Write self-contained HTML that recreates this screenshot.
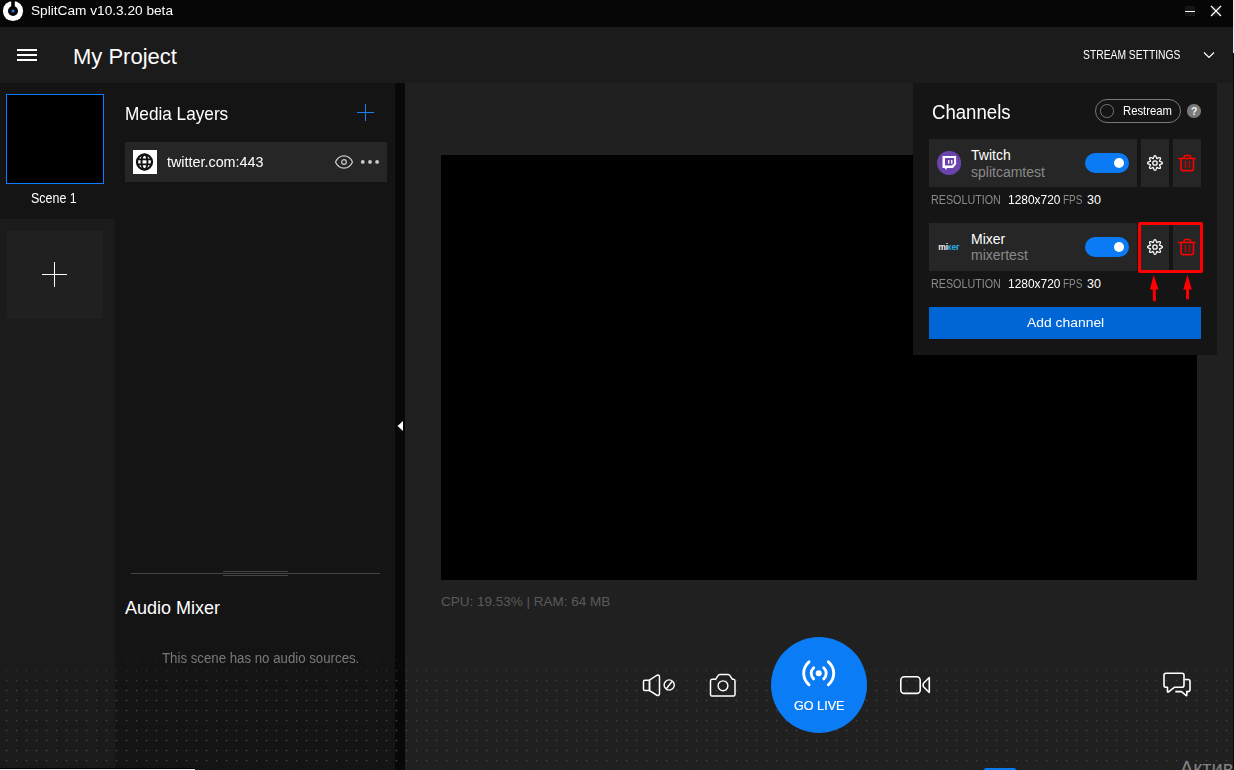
<!DOCTYPE html>
<html><head><meta charset="utf-8">
<style>
*{margin:0;padding:0;box-sizing:border-box}
html,body{width:1234px;height:770px;overflow:hidden;background:#202020;font-family:"Liberation Sans",sans-serif;color:#fff}
.a{position:absolute}
.t{position:absolute;white-space:nowrap;line-height:1;transform-origin:0 0}
</style></head><body>
<!-- title bar -->
<div class="a" style="left:0;top:0;width:1234px;height:27px;background:#060606"></div>
<svg class="a" style="left:0;top:0" width="28" height="24" viewBox="0 0 28 24">
  <circle cx="13" cy="11" r="10.1" fill="#fff"/>
  <circle cx="13" cy="11" r="5" fill="#060606"/>
  <rect x="11.2" y="0" width="3.6" height="7" fill="#060606"/>
  <circle cx="13" cy="11" r="1.6" fill="#1a78f0"/>
</svg>
<div class="t" id="title" style="left:31px;top:4px;font-size:13.4px;transform:scaleX(1.02)">SplitCam v10.3.20 beta</div>
<div class="a" style="left:1185px;top:6px;width:10px;height:10px;background:#161616"></div>
<div class="a" style="left:1185px;top:10.5px;width:10px;height:1.5px;background:#fff"></div>
<div class="a" style="left:1211px;top:6px;width:10px;height:10px;background:#161616"></div>
<svg class="a" style="left:1210px;top:5px" width="12" height="12" viewBox="0 0 12 12"><path d="M1 1L11 11M11 1L1 11" stroke="#fff" stroke-width="1.3"/></svg>
<div class="a" style="left:1233px;top:0;width:1px;height:23px;background:#e8e8e8"></div>

<!-- header -->
<div class="a" style="left:0;top:27px;width:1233px;height:56px;background:#1b1b1b"></div>
<div class="a" style="left:17px;top:49px;width:20px;height:2px;background:#fff"></div>
<div class="a" style="left:17px;top:54px;width:20px;height:2px;background:#fff"></div>
<div class="a" style="left:17px;top:59px;width:20px;height:2px;background:#fff"></div>
<div class="t" id="myproj" style="left:73px;top:46px;font-size:22px">My Project</div>
<div class="t" id="ss" style="left:1083px;top:49px;font-size:12.5px;transform:scaleX(0.825)">STREAM SETTINGS</div>
<svg class="a" style="left:1203px;top:51px" width="12" height="9" viewBox="0 0 12 9"><path d="M1 1.5L6 6.5L11 1.5" stroke="#fff" stroke-width="1.2" fill="none"/></svg>

<!-- scene column -->
<div class="a" style="left:0;top:83px;width:115px;height:687px;background:#1b1b1b"></div>
<div class="a" style="left:0;top:83px;width:115px;height:136px;background:#141414"></div>
<div class="a" style="left:6px;top:94px;width:98px;height:90px;border:1px solid #0a7cff;background:#000"></div>
<div class="t" id="scene1" style="left:31px;top:191px;font-size:14.5px;transform:scaleX(0.86)">Scene 1</div>
<div class="a" style="left:7px;top:231px;width:96px;height:88px;background:#202020"></div>
<div class="a" style="left:42px;top:274px;width:25px;height:1px;background:#fff"></div>
<div class="a" style="left:54px;top:262px;width:1px;height:25px;background:#fff"></div>

<!-- media layers column -->
<div class="a" style="left:115px;top:83px;width:280px;height:687px;background:#141414"></div>
<div class="t" id="ml" style="left:125px;top:104px;font-size:19px;transform:scaleX(0.905)">Media Layers</div>
<div class="a" style="left:357px;top:112px;width:17px;height:1px;background:#1a7df0"></div>
<div class="a" style="left:365px;top:104px;width:1px;height:17px;background:#1a7df0"></div>
<div class="a" style="left:125px;top:142px;width:262px;height:40px;background:#262626"></div>
<div class="a" style="left:133px;top:150px;width:24px;height:24px;background:#fff"></div>
<svg class="a" style="left:133px;top:150px" width="24" height="24" viewBox="0 0 24 24">
  <circle cx="11.5" cy="12" r="7.5" fill="none" stroke="#111" stroke-width="2.3"/>
  <ellipse cx="11.5" cy="12" rx="3" ry="7.5" fill="none" stroke="#111" stroke-width="1.9"/>
  <path d="M4 9.4H19M4 14.4H19" stroke="#111" stroke-width="1.9"/>
</svg>
<div class="t" id="tw" style="left:167px;top:155px;font-size:14px;transform:scaleX(1.025)">twitter.com:443</div>
<svg class="a" style="left:334px;top:154px" width="20" height="16" viewBox="0 0 20 16">
  <path d="M1.5 8C5 -0.2 15 -0.2 18.5 8C15 16.2 5 16.2 1.5 8Z" fill="none" stroke="#ccc" stroke-width="1.2"/>
  <circle cx="10" cy="8" r="2.3" fill="none" stroke="#ccc" stroke-width="1.2"/>
</svg>

<svg class="a" style="left:355px;top:155px" width="30" height="14" viewBox="0 0 30 14"><circle cx="7.75" cy="6.9" r="1.9" fill="#ccc"/><circle cx="15" cy="6.9" r="1.9" fill="#ccc"/><circle cx="22.1" cy="6.9" r="1.9" fill="#ccc"/></svg>
<div class="a" style="left:131px;top:573px;width:249px;height:1px;background:#444"></div>
<div class="a" style="left:223px;top:571px;width:65px;height:1px;background:#444"></div>
<div class="a" style="left:223px;top:575px;width:65px;height:1px;background:#444"></div>
<div class="t" id="am" style="left:125px;top:599px;font-size:18px">Audio Mixer</div>
<div class="t" id="nas" style="left:162px;top:651px;font-size:14px;color:#7a7a7a;transform:scaleX(0.946)">This scene has no audio sources.</div>

<!-- divider -->
<div class="a" style="left:395px;top:83px;width:10px;height:687px;background:#080808"></div>
<svg class="a" style="left:396px;top:420px" width="8" height="12" viewBox="0 0 8 12"><path d="M7 1V11L1.5 6Z" fill="#fff"/></svg>

<!-- preview -->
<div class="a" style="left:405px;top:83px;width:828px;height:687px;background:#202020"></div>
<div class="a" style="left:441px;top:155px;width:756px;height:425px;background:#000"></div>
<div class="t" id="cpu" style="left:441px;top:595px;font-size:13.5px;color:#5a5a5a;transform:scaleX(1.0)">CPU: 19.53% | RAM: 64 MB</div>

<!-- channels panel -->
<div class="a" style="left:913px;top:83px;width:304px;height:272px;background:#151515"></div>
<div class="t" id="ch" style="left:932px;top:102px;font-size:20px;transform:scaleX(0.93)">Channels</div>
<div class="a" style="left:1095px;top:99px;width:86px;height:24px;border:1px solid #7a7a7a;border-radius:12px"></div>
<div class="a" style="left:1100px;top:104px;width:13.5px;height:13.5px;border:1px solid #777;border-radius:50%"></div>
<div class="t" id="rs" style="left:1123px;top:104px;font-size:13px;transform:scaleX(0.87)">Restream</div>
<div class="a" style="left:1187.3px;top:104px;width:13.5px;height:13.5px;border-radius:50%;background:#7a7a7a"></div>
<div class="t" style="left:1191px;top:105.5px;font-size:10.5px;font-weight:bold;color:#f0f0f0">?</div>

<!-- twitch card -->
<div class="a" style="left:929px;top:139px;width:208px;height:48px;background:#262626"></div>
<div class="a" style="left:1141px;top:139px;width:28px;height:48px;background:#262626"></div>
<div class="a" style="left:1173px;top:139px;width:28px;height:48px;background:#262626"></div>
<svg class="a" style="left:937px;top:151px" width="24" height="24" viewBox="0 0 24 24"><circle cx="12.1" cy="12" r="12.1" fill="#6a44ac"/><path d="M5.5 5.1H19.1V13.2L16 17.1H9.7L9.5 18.9L7.5 17.1H5.5Z" fill="#fff"/><path d="M8 7.1H17.1V12.4L14.8 14.6H8Z" fill="#6a44ac"/><rect x="11.1" y="9" width="1.3" height="3.7" fill="#fff"/><rect x="14.1" y="9" width="1.3" height="3.7" fill="#fff"/></svg>
<svg class="a" style="left:1143px;top:151px" width="24" height="24" viewBox="0 0 24 24"><path d="M10.16 7.57L11.10 5.16Q12.00 4.00 12.90 5.16L13.84 7.57L16.20 6.53Q17.66 6.34 17.47 7.80L16.43 10.16L18.84 11.10Q20.00 12.00 18.84 12.90L16.43 13.84L17.47 16.20Q17.66 17.66 16.20 17.47L13.84 16.43L12.90 18.84Q12.00 20.00 11.10 18.84L10.16 16.43L7.80 17.47Q6.34 17.66 6.53 16.20L7.57 13.84L5.16 12.90Q4.00 12.00 5.16 11.10L7.57 10.16L6.53 7.80Q6.34 6.34 7.80 6.53Z" fill="none" stroke="#fff" stroke-width="1.25" stroke-linejoin="round"/><circle cx="12" cy="12" r="2.2" fill="none" stroke="#fff" stroke-width="1.3"/></svg>
<svg class="a" style="left:1175px;top:151px" width="24" height="24" viewBox="0 0 24 24"><path d="M3.2 7.5H20.7" stroke="#f00" stroke-width="1.5"/><path d="M9 7.3V6.3Q9 4.6 10.7 4.6H13.8Q15.5 4.6 15.5 6.3V7.3" fill="none" stroke="#f00" stroke-width="1.5"/><path d="M6 8V17.5Q6 19.6 8.1 19.6H16.4Q18.5 19.6 18.5 17.5V8" fill="none" stroke="#f00" stroke-width="1.6"/><path d="M10.5 10V17M14.5 10V17" stroke="#c00" stroke-width="1.4"/></svg>
<div class="t" id="twt" style="left:971px;top:148px;font-size:14px">Twitch</div>
<div class="t" id="twu" style="left:971px;top:165px;font-size:14px;color:#8a8a8a">splitcamtest</div>
<div class="a" style="left:1085px;top:153px;width:44px;height:20px;border-radius:10px;background:#0a7af5"></div>
<div class="a" style="left:1114px;top:158px;width:10px;height:10px;border-radius:50%;background:#fff"></div>
<div class="t" id="res1" style="left:931px;top:194px;font-size:12.5px;color:#8a8a8a;transform:scaleX(0.86)">RESOLUTION</div>
<div class="t" id="r1" style="left:1008px;top:194px;font-size:12.5px;transform:scaleX(0.955)">1280x720</div>
<div class="t" id="f1" style="left:1063px;top:194px;font-size:12.5px;color:#8a8a8a;transform:scaleX(0.8)">FPS</div>
<div class="t" id="n1" style="left:1087px;top:194px;font-size:12.5px">30</div>

<!-- mixer card -->
<div class="a" style="left:929px;top:223px;width:208px;height:48px;background:#262626"></div>
<div class="a" style="left:1141px;top:223px;width:28px;height:48px;background:#262626"></div>
<div class="a" style="left:1173px;top:223px;width:28px;height:48px;background:#262626"></div>
<svg class="a" style="left:936px;top:240px" width="28" height="14" viewBox="0 0 28 14"><text x="2.3" y="10" font-family="Liberation Sans" font-weight="bold" font-size="8.6" fill="#eee" letter-spacing="-0.3">mi</text><text x="10.8" y="10" font-family="Liberation Sans" font-weight="bold" font-size="8.6" fill="#29b0e6" letter-spacing="-0.2">xer</text></svg>
<svg class="a" style="left:1143px;top:235px" width="24" height="24" viewBox="0 0 24 24"><path d="M10.16 7.57L11.10 5.16Q12.00 4.00 12.90 5.16L13.84 7.57L16.20 6.53Q17.66 6.34 17.47 7.80L16.43 10.16L18.84 11.10Q20.00 12.00 18.84 12.90L16.43 13.84L17.47 16.20Q17.66 17.66 16.20 17.47L13.84 16.43L12.90 18.84Q12.00 20.00 11.10 18.84L10.16 16.43L7.80 17.47Q6.34 17.66 6.53 16.20L7.57 13.84L5.16 12.90Q4.00 12.00 5.16 11.10L7.57 10.16L6.53 7.80Q6.34 6.34 7.80 6.53Z" fill="none" stroke="#fff" stroke-width="1.25" stroke-linejoin="round"/><circle cx="12" cy="12" r="2.2" fill="none" stroke="#fff" stroke-width="1.3"/></svg>
<svg class="a" style="left:1175px;top:235px" width="24" height="24" viewBox="0 0 24 24"><path d="M3.2 7.5H20.7" stroke="#f00" stroke-width="1.5"/><path d="M9 7.3V6.3Q9 4.6 10.7 4.6H13.8Q15.5 4.6 15.5 6.3V7.3" fill="none" stroke="#f00" stroke-width="1.5"/><path d="M6 8V17.5Q6 19.6 8.1 19.6H16.4Q18.5 19.6 18.5 17.5V8" fill="none" stroke="#f00" stroke-width="1.6"/><path d="M10.5 10V17M14.5 10V17" stroke="#c00" stroke-width="1.4"/></svg>
<div class="t" id="mxt" style="left:971px;top:232px;font-size:14px">Mixer</div>
<div class="t" id="mxu" style="left:971px;top:248px;font-size:14px;color:#8a8a8a">mixertest</div>
<div class="a" style="left:1085px;top:237px;width:44px;height:20px;border-radius:10px;background:#0a7af5"></div>
<div class="a" style="left:1114px;top:242px;width:10px;height:10px;border-radius:50%;background:#fff"></div>
<div class="t" id="res2" style="left:931px;top:278px;font-size:12.5px;color:#8a8a8a;transform:scaleX(0.86)">RESOLUTION</div>
<div class="t" id="r2" style="left:1008px;top:278px;font-size:12.5px;transform:scaleX(0.955)">1280x720</div>
<div class="t" id="f2" style="left:1063px;top:278px;font-size:12.5px;color:#8a8a8a;transform:scaleX(0.8)">FPS</div>
<div class="t" id="n2" style="left:1087px;top:278px;font-size:12.5px">30</div>

<div class="a" style="left:929px;top:307px;width:272px;height:32px;background:#0066d6"></div>
<div class="t" id="addch" style="left:1027px;top:316.8px;font-size:12.8px;transform:scaleX(1.085)">Add channel</div>

<!-- red annotations -->
<div class="a" style="left:1138px;top:222px;width:65px;height:51px;border:3px solid #f00;border-radius:2px"></div>

<svg class="a" style="left:1145px;top:272px" width="50" height="32" viewBox="0 0 50 32"><path d="M8.6 3L4.9 17.5H13.6Z" fill="#f00"/><path d="M9.2 14L9.4 28" stroke="#f00" stroke-width="3" stroke-linecap="round"/><path d="M42.5 3L38.2 17.5H46.8Z" fill="#f00"/><path d="M42.5 14V26" stroke="#f00" stroke-width="3" stroke-linecap="round"/></svg>
<!-- bottom bar -->
<svg class="a" style="left:0;top:650px" width="1234" height="120">
<defs><pattern id="dp" x="0" y="0" width="10" height="10" patternUnits="userSpaceOnUse">
<rect x="6" y="0" width="1" height="1" fill="#424242"/>
<rect x="5" y="0" width="1" height="1" fill="#424242" fill-opacity="0.3"/>
<rect x="7" y="0" width="1" height="1" fill="#424242" fill-opacity="0.3"/>
<rect x="6" y="1" width="1" height="1" fill="#424242" fill-opacity="0.35"/>
<rect x="6" y="9" width="1" height="1" fill="#424242" fill-opacity="0.3"/>
</pattern>
<linearGradient id="dg" x1="0" y1="0" x2="0" y2="1"><stop offset="0" stop-color="#fff" stop-opacity="0"/><stop offset="0.04" stop-color="#fff" stop-opacity="0"/><stop offset="0.083" stop-color="#fff" stop-opacity="0.25"/><stop offset="0.167" stop-color="#fff" stop-opacity="0.6"/><stop offset="0.25" stop-color="#fff" stop-opacity="0.88"/><stop offset="0.333" stop-color="#fff" stop-opacity="1"/><stop offset="1" stop-color="#fff" stop-opacity="1"/></linearGradient>
<mask id="dm"><rect x="0" y="0" width="1234" height="120" fill="url(#dg)"/></mask>
</defs>
<rect x="0" y="0" width="1233" height="120" fill="url(#dp)" mask="url(#dm)" shape-rendering="crispEdges"/>
</svg>

<svg class="a" style="left:636px;top:664px" width="110" height="42" viewBox="0 0 110 42">
<path d="M13.5 16.2H8.8Q7.5 16.2 7.5 17.5V25.3Q7.5 26.6 8.8 26.6H13.5Z" fill="none" stroke="#fff" stroke-width="1.5" stroke-linejoin="round"/>
<path d="M13.5 16.2L20.5 11.5Q23.5 10 23.5 13V29.5Q23.5 32.5 20.5 31L13.5 26.6Z" fill="none" stroke="#fff" stroke-width="1.5" stroke-linejoin="round"/>
<circle cx="33.2" cy="21" r="5.1" fill="none" stroke="#fff" stroke-width="1.4"/>
<path d="M30.5 24.5L36 17.5" stroke="#fff" stroke-width="1.4"/>
<path d="M76 15.2H79.8L82 11.6Q82.5 10.4 84 10.4H92Q93.5 10.4 94 11.6L96.2 15.2H97.5Q99 15.2 99 17V30.4Q99 32 97.5 32H76Q74.5 32 74.5 30.4V17Q74.5 15.2 76 15.2Z" fill="none" stroke="#fff" stroke-width="1.5" stroke-linejoin="round"/>
<circle cx="87" cy="21.8" r="4.9" fill="none" stroke="#fff" stroke-width="1.4"/>
</svg>

<svg class="a" style="left:890px;top:664px" width="50" height="42" viewBox="0 0 50 42">
<rect x="10.8" y="12.8" width="19.4" height="16.6" rx="3.5" fill="none" stroke="#fff" stroke-width="1.6"/>
<path d="M39.3 13.5V28.5L33.5 22.8Q32.6 21 33.5 19.2Z" fill="none" stroke="#fff" stroke-width="1.6" stroke-linejoin="round"/>
</svg>
<svg class="a" style="left:1155px;top:664px" width="45" height="42" viewBox="0 0 45 42">
<path d="M19.6 23.2H27Q29 23.2 29 21.2V11.3Q29 9.3 27 9.3H11Q9 9.3 9 11.3V21.2Q9 23.2 11 23.2H12.5V27.4Q12.5 28.6 13.6 27.8Z" fill="none" stroke="#fff" stroke-width="1.6" stroke-linejoin="round"/>
<path d="M29.6 15.5H33Q35 15.5 35 17.5V25.6Q35 27.6 33 27.6H31.8V31Q31.8 32.1 30.9 31.4L26.5 27.6H20.3" fill="none" stroke="#fff" stroke-width="1.6" stroke-linejoin="round"/>
</svg>

<div class="a" style="left:771px;top:637px;width:96px;height:96px;border-radius:50%;background:#0a7cf5"></div>
<svg class="a" style="left:800px;top:658px" width="38" height="30" viewBox="0 0 38 30">
<circle cx="18.7" cy="15.3" r="3" fill="#fff"/>
<path d="M13.68 9.73A7.5 7.5 0 0 0 13.68 20.87M23.72 9.73A7.5 7.5 0 0 1 23.72 20.87" fill="none" stroke="#fff" stroke-width="2.9" stroke-linecap="round"/>
<path d="M9.06 3.81A15 15 0 0 0 9.06 26.79M28.34 3.81A15 15 0 0 1 28.34 26.79" fill="none" stroke="#fff" stroke-width="2.9" stroke-linecap="round"/>
</svg>
<div class="t" id="golive" style="left:794px;top:699px;font-size:13px;-webkit-text-stroke:0.2px #fff;transform:scaleX(0.97)">GO LIVE</div>
<div class="a" style="left:0;top:768px;width:195px;height:1px;background:#000"></div>
<div class="a" style="left:0;top:769px;width:195px;height:1px;background:#f2f2f8"></div>
<div class="a" style="left:984px;top:768px;width:32px;height:2px;border-radius:2px 2px 0 0;background:#0a78e8"></div>
<div class="t" id="aktiv" style="left:1180px;top:758px;font-size:20px;color:#808080">Активация</div>
<div class="a" style="left:1233px;top:53px;width:1px;height:717px;background:#0a0a0a"></div>
<div class="a" style="left:1233px;top:23px;width:1px;height:30px;background:#e4e8f0"></div>
</body></html>
